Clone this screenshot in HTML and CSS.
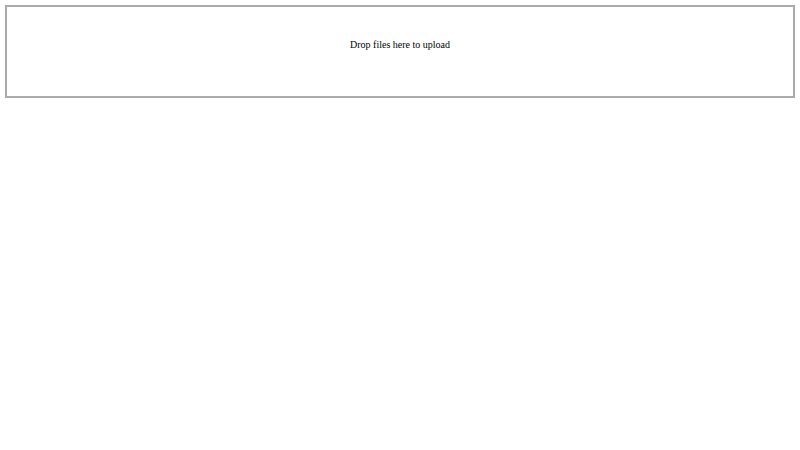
FILE: index.html
```html
<!DOCTYPE html>
<html lang="en">
  <head>
    <meta charset="UTF-8" />
    <meta name="viewport" content="width=device-width, initial-scale=1.0" />
    <title>Upload</title>
    <link rel="stylesheet" href="styles.css">
  </head>
  <body>
    <div class="dropzone">
      <p class="hint">Drop files here to upload</p>
    </div>
  </body>
</html>
```

FILE: styles.css
```css
body {
  margin: 5px;
  font-family: "Liberation Serif", "Times New Roman", serif;
}
.dropzone {
  border: 2px solid #aaa;
  padding-top: 32px;
  height: 57px;
  text-align: center;
}
.hint {
  margin: 0;
  font-size: 10px;
}
```
